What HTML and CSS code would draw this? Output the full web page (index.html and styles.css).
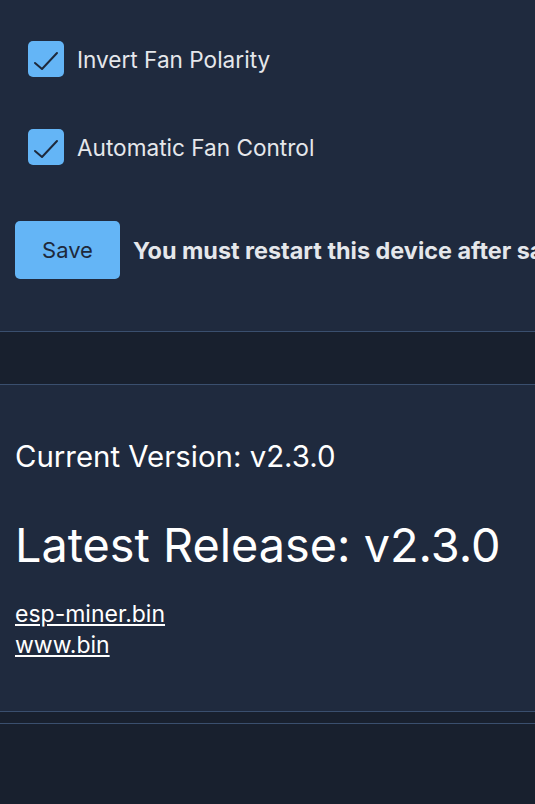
FILE: index.html
```html
<!DOCTYPE html>
<html>
<head>
<meta charset="utf-8">
<link rel="stylesheet" href="styles.css">
</head>
<body>
<div class="page">
  <section class="card card-settings">
    <label class="check-row">
      <span class="check"><svg viewBox="0 0 36 36" width="36" height="36"><path d="M7 22 L14 28 L29 12" fill="none" stroke="#1e293b" stroke-width="2" stroke-linecap="round" stroke-linejoin="round"/></svg></span>
      <span class="check-label">Invert Fan Polarity</span>
    </label>
    <label class="check-row">
      <span class="check"><svg viewBox="0 0 36 36" width="36" height="36"><path d="M7 22 L14 28 L29 12" fill="none" stroke="#1e293b" stroke-width="2" stroke-linecap="round" stroke-linejoin="round"/></svg></span>
      <span class="check-label">Automatic Fan Control</span>
    </label>
    <div class="save-row">
      <button class="btn-save">Save</button>
      <b class="notice">You must restart this device after saving for changes to take effect.</b>
    </div>
  </section>
  <div class="gap"></div>
  <section class="card card-update">
    <h3 class="current">Current Version: v2.3.0</h3>
    <h2 class="latest">Latest Release: v2.3.0</h2>
    <div class="links">
      <a href="#">esp-miner.bin</a><br>
      <a href="#">www.bin</a>
    </div>
  </section>
  <div class="gap small"></div>
  <div class="card-next"></div>
</div>
</body>
</html>
```
FILE: styles.css
```css
html, body {
  margin: 0;
  padding: 0;
  background: #18202e;
  overflow: hidden;
}
body {
  font-family: Inter, "Noto Sans", sans-serif;
  color: #e5e7eb;
  width: 535px;
  height: 804px;
}
.page {
  display: flex;
  flex-direction: column;
}
.card {
  background: #1f2a3e;
  border-bottom: 1px solid #3a4f6e;
}
.card-settings {
  display: flex;
  flex-direction: column;
  gap: 52px;
  padding: 41px 15px 0 15px;
  height: 290px;
}
.check-row {
  display: flex;
  align-items: center;
  gap: 13px;
  height: 36px;
  margin-left: 13px;
}
.check {
  width: 36px;
  height: 36px;
  border-radius: 5px;
  background: #64b5f6;
  display: flex;
  flex-shrink: 0;
}
.check-label {
  font-size: 22.6px;
  color: #e5e7eb;
}
.save-row {
  display: flex;
  align-items: center;
  gap: 13px;
  white-space: nowrap;
  margin-top: 4px;
}
.btn-save {
  width: 105px;
  height: 58px;
  background: #64b5f6;
  border: none;
  border-radius: 5px;
  font-family: Inter, "Noto Sans", sans-serif;
  font-size: 22px;
  color: #1e293b;
  flex-shrink: 0;
}
.notice {
  font-size: 23.4px;
  font-weight: 700;
  color: #e5e7eb;
}
.gap {
  height: 52px;
}
.gap.small {
  height: 11px;
}
.card-update {
  border-top: 1px solid #3a4f6e;
  padding: 0 15px;
  height: 326px;
}
.current {
  margin: 55px 0 0 0;
  font-size: 29.4px;
  font-weight: 400;
  color: #ffffff;
  line-height: 34px;
}
.latest {
  margin: 42px 0 0 0;
  font-size: 46.8px;
  font-weight: 400;
  color: #ffffff;
  line-height: 58px;
}
.links {
  margin-top: 25px;
  font-size: 23px;
  line-height: 31px;
}
.links a {
  color: #ffffff;
  text-decoration: underline;
}
.card-next {
  border-top: 1px solid #3a4f6e;
  height: 80px;
}
```
